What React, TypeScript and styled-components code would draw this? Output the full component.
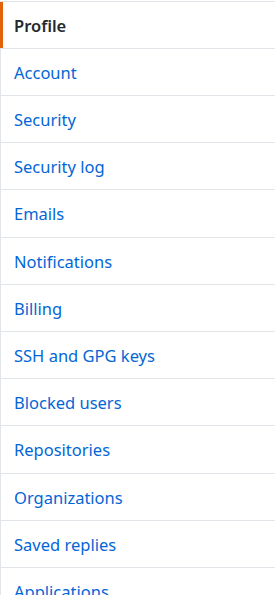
import React, { FC } from "react";
import styled, { createGlobalStyle } from "styled-components";

const GlobalStyle = createGlobalStyle`
  html, body {
    margin: 0;
    padding: 0;
    background: #ffffff;
    overflow: hidden;
  }
  body {
    font-family: "Noto Sans", "Open Sans", Arial, sans-serif;
  }
`;

const Menu = styled.nav`
  width: 320px;
  margin-top: 0.6px;
  border-top: 1px solid #e1e4e8;
  border-left: 1px solid #e1e4e8;
  background: #ffffff;
`;

const MenuItem = styled.a<{ $selected?: boolean }>`
  position: relative;
  display: block;
  padding: 11px 13px 9px;
  line-height: 26.2px;
  font-size: 16.5px;
  text-decoration: none;
  color: ${(p) => (p.$selected ? "#24292e" : "#0366d6")};
  font-weight: ${(p) => (p.$selected ? 600 : 400)};
  border-bottom: 1px solid #e1e4e8;
  cursor: pointer;

  &::before {
    content: "";
    display: ${(p) => (p.$selected ? "block" : "none")};
    position: absolute;
    top: 0;
    bottom: 0;
    left: -1px;
    width: 3px;
    background: #e36209;
  }
`;

const items = [
  "Profile",
  "Account",
  "Security",
  "Security log",
  "Emails",
  "Notifications",
  "Billing",
  "SSH and GPG keys",
  "Blocked users",
  "Repositories",
  "Organizations",
  "Saved replies",
  "Applications",
];

const App: FC = () => (
  <>
    <GlobalStyle />
    <Menu>
      {items.map((label, i) => (
        <MenuItem key={label} $selected={i === 0}>
          {label}
        </MenuItem>
      ))}
    </Menu>
  </>
);

export default App;
